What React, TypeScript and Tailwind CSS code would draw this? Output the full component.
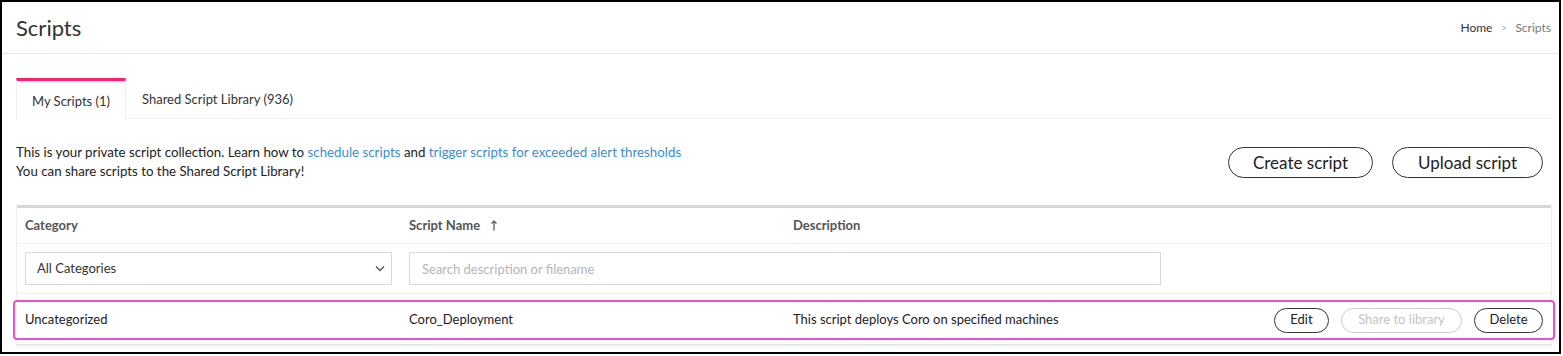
const font = { fontFamily: "Lato, 'Noto Sans', sans-serif" };

function PillButton({ children, className = "" }: { children: React.ReactNode; className?: string }) {
  return (
    <button
      className={`rounded-full border border-[#333] bg-white text-[#222] ${className}`}
    >
      {children}
    </button>
  );
}

export default function App() {
  return (
    <div style={font} className="h-[356px] w-[1563px] bg-white">
      <div className="h-[354px] w-[1561px] border-2 border-black bg-white">
        {/* header */}
        <div className="flex h-[52px] items-center justify-between border-b border-[#e6e6e6] pl-[14px] pr-[8px]">
          <h1 className="text-[22px] text-[#333]">Scripts</h1>
          <div className="flex items-center gap-[8px] text-[12px]">
            <span className="text-[#333]">Home</span>
            <span className="text-[#bbb]">&gt;</span>
            <span className="text-[#777]">Scripts</span>
          </div>
        </div>

        <div className="pl-[14px] pr-[7px]">
          {/* tabs */}
          <div className="mt-[24px] flex h-[41px] border-b border-[#eee] text-[13px] text-[#333]">
            <div className="-mb-px flex w-[110px] items-center justify-center border-x border-t-[3px] border-x-[#eee] border-t-[#ff1f6e] bg-white pt-[3px]">
              My Scripts (1)
            </div>
            <div className="flex items-center px-[16px] pt-[4px]">Shared Script Library (936)</div>
          </div>

          {/* intro */}
          <div className="mt-[24px] flex items-start justify-between pr-[9px]">
            <div className="text-[13.3px] leading-[19px] text-[#222]">
              <p>
                This is your private script collection. Learn how to{" "}
                <a className="text-[#3e8ec8]">schedule scripts</a> and{" "}
                <a className="text-[#3e8ec8]">trigger scripts for exceeded alert thresholds</a>
              </p>
              <p>You can share scripts to the Shared Script Library!</p>
            </div>
            <div className="mt-[4px] flex gap-[19px] text-[17px]">
              <PillButton className="h-[31px] w-[145px]">Create script</PillButton>
              <PillButton className="h-[31px] w-[151px]">Upload script</PillButton>
            </div>
          </div>

          {/* table */}
          <div className="mt-[24px] rounded-t-[3px] border-x border-b border-t-[3px] border-x-[#eee] border-b-[#e2e2e2] border-t-[#d3d6df] shadow-[0_2px_2px_rgba(0,0,0,0.06)]">
            <div className="grid h-[36px] grid-cols-[384px_384px_1fr] items-center border-b border-[#f0f0f0] px-[8px] text-[13px] font-bold text-[#555]">
              <div>Category</div>
              <div className="flex items-center gap-[10px]">
                Script Name
                <svg width="8" height="11" viewBox="0 0 8 11" fill="none" stroke="#666" strokeWidth="1.4">
                  <path d="M4 10.5V1M1.5 3.5L4 1l2.5 2.5" />
                </svg>
              </div>
              <div>Description</div>
            </div>
            <div className="grid h-[50px] grid-cols-[384px_752px_1fr] items-center border-b border-[#f0f0f0] px-[8px]">
              <div className="pr-[17px]">
                <div className="relative">
                  <select className="h-[33px] w-full appearance-none border border-[#d5d8df] bg-white pl-[11px] text-[13px] text-[#333] outline-none">
                    <option>All Categories</option>
                  </select>
                  <svg className="pointer-events-none absolute right-[7px] top-[13px]" width="10" height="7" viewBox="0 0 10 7" fill="none" stroke="#555" strokeWidth="1.4">
                    <path d="M1 1.5l4 4 4-4" />
                  </svg>
                </div>
              </div>
              <input
                placeholder="Search description or filename"
                className="h-[33px] w-full border border-[#d5d8df] px-[12px] text-[13px] text-[#333] outline-none placeholder:text-[#b5b5b5]"
              />
              <div />
            </div>
            <div className="h-[6px]" />
            <div className="-mx-[4px] grid h-[40px] grid-cols-[384px_384px_1fr] items-center rounded-[4px] border-2 border-[#f04dcf] bg-white px-[10px] text-[13px] text-[#222]">
              <div>Uncategorized</div>
              <div>Coro_Deployment</div>
              <div className="flex items-center justify-between">
                <span>This script deploys Coro on specified machines</span>
                <div className="flex gap-[12px] text-[13px]">
                  <PillButton className="h-[25px] w-[55px]">Edit</PillButton>
                  <button className="h-[25px] w-[121px] rounded-full border border-[#ccc] bg-white text-[#c4c4c4]">
                    Share to library
                  </button>
                  <PillButton className="h-[25px] w-[69px]">Delete</PillButton>
                </div>
              </div>
            </div>
            <div className="h-[4px]" />
          </div>
        </div>
      </div>
    </div>
  );
}
